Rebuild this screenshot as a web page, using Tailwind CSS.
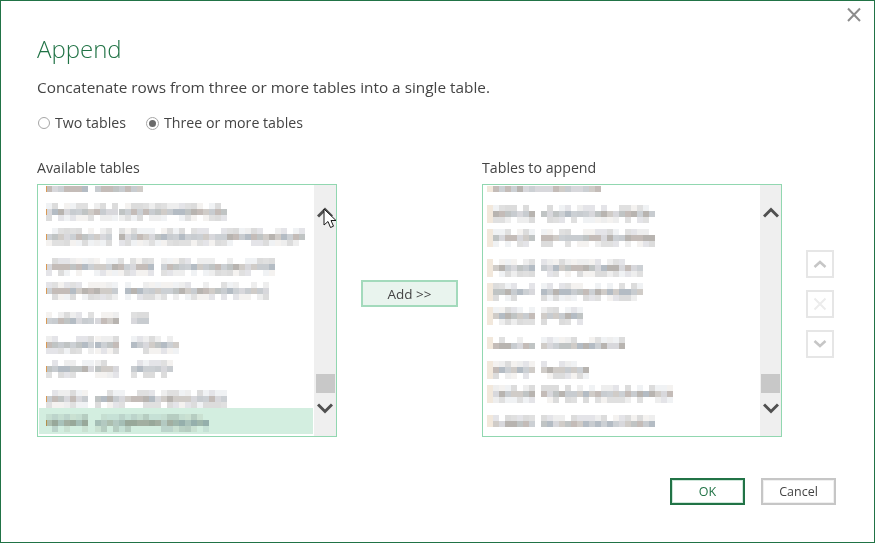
<!DOCTYPE html>
<html lang="en">
<head>
  <meta charset="UTF-8" />
  <title>Append</title>
  <script src="https://cdn.jsdelivr.net/npm/@tailwindcss/browser@4"></script>
</head>
<body class="bg-white overflow-hidden">
  <div class="relative w-[875px] h-[543px] border border-[#217346] flex flex-col pl-[36px] font-['Open_Sans',sans-serif] text-[#444444] text-[14.2px] leading-[20px]">
    <button class="absolute top-[6px] right-[12px] w-[16px] h-[16px]">
      <svg viewBox="0 0 16 16" class="w-[16px] h-[16px]" fill="none" stroke="#8c8c8c" stroke-width="2"><path d="M2 1.5l12 12.500M14 1.5L2 14"/></svg>
    </button>

    <h1 class="mt-[31px] h-[34px] text-[24px] leading-[34px] font-light text-[#217346]">Append</h1>
    <p class="mt-[11px] text-[15.35px]">Concatenate rows from three or more tables into a single table.</p>

    <div class="mt-[16px] flex items-center h-[20px]">
      <span class="w-[12px] h-[12px] ml-[1px] rounded-full border border-[#a6a6a6]"></span>
      <span class="ml-[5px]">Two tables</span>
      <span class="ml-[20px] w-[13px] h-[13px] rounded-full border border-[#a6a6a6] flex items-center justify-center"><span class="w-[7px] h-[7px] rounded-full bg-[#6a6a6a]"></span></span>
      <span class="ml-[5px]">Three or more tables</span>
    </div>

    <div class="mt-[25px] flex">
      <div class="w-[300px]">
        <div class="h-[20px]">Available tables</div>
        <div class="mt-[6px] h-[253px] border border-[#91d7b0] flex">
          <div id="left-rows" class="flex-1 flex flex-col justify-end pb-[2px] overflow-hidden"></div>
          <div class="w-[22px] bg-[#efefef] flex flex-col items-center">
            <svg class="mt-[21px] w-[16px] h-[12px]" viewBox="0 0 16 12" fill="none" stroke="#505050" stroke-width="3"><path d="M1 10.500l7-7 7 7"/></svg>
            <div class="mt-[156px] w-[19px] h-[19px] bg-[#c8c8c8]"></div>
            <svg class="mt-[10px] w-[16px] h-[12px]" viewBox="0 0 16 12" fill="none" stroke="#505050" stroke-width="3"><path d="M1 1.500l7 7 7-7"/></svg>
          </div>
        </div>
      </div>

      <div class="w-[145px] flex justify-center pt-[122px]">
        <button class="w-[97px] h-[27px] border-2 border-[#a3dabc] bg-[#e9f4ee] text-[13.5px] leading-[22px]">Add &gt;&gt;</button>
      </div>

      <div class="w-[300px]">
        <div class="h-[20px]">Tables to append</div>
        <div class="mt-[6px] h-[253px] border border-[#91d7b0] flex">
          <div id="right-rows" class="flex-1 flex flex-col justify-end pb-[2px] overflow-hidden"></div>
          <div class="w-[21px] bg-[#efefef] flex flex-col items-center">
            <svg class="mt-[21px] w-[16px] h-[12px]" viewBox="0 0 16 12" fill="none" stroke="#505050" stroke-width="3"><path d="M1 10.500l7-7 7 7"/></svg>
            <div class="mt-[156px] w-[19px] h-[19px] bg-[#c8c8c8]"></div>
            <svg class="mt-[10px] w-[16px] h-[12px]" viewBox="0 0 16 12" fill="none" stroke="#505050" stroke-width="3"><path d="M1 1.500l7 7 7-7"/></svg>
          </div>
        </div>
      </div>

      <div class="ml-[24px] pt-[92px] flex flex-col gap-[12px]">
        <button class="w-[28px] h-[28px] border-2 border-[#e6e6e6] flex items-center justify-center">
          <svg class="w-[14px] h-[10px]" viewBox="0 0 14 10" fill="none" stroke="#c6c6c6" stroke-width="2.500"><path d="M1.500 8l5.500-5 5.500 5"/></svg>
        </button>
        <button class="w-[28px] h-[28px] border-2 border-[#e6e6e6] flex items-center justify-center">
          <svg class="w-[14px] h-[14px]" viewBox="0 0 14 14" fill="none" stroke="#ececec" stroke-width="2"><path d="M1.500 1.500l11 11M12.500 1.500l-11 11"/></svg>
        </button>
        <button class="w-[28px] h-[28px] border-2 border-[#e6e6e6] flex items-center justify-center">
          <svg class="w-[14px] h-[10px]" viewBox="0 0 14 10" fill="none" stroke="#c6c6c6" stroke-width="2.500"><path d="M1.500 2l5.500 5 5.500-5"/></svg>
        </button>
      </div>
    </div>

    <div class="mt-[41px] flex justify-end gap-[16px] pr-[38px]">
      <button class="w-[75px] h-[27px] border-2 border-[#217346] shadow-[inset_0_0_0_1px_#cfe6da] text-[#217346] text-[12.5px]">OK</button>
      <button class="w-[75px] h-[27px] border-2 border-[#c6c6c6] shadow-[inset_0_0_0_1px_#f0f0f0] text-[12.5px]">Cancel</button>
    </div>

    <!-- mouse pointer lying over the scrollbar -->
    <svg class="absolute left-[322px] top-[207px] w-[14px] h-[22px]" viewBox="0 0 14 22">
      <path d="M1 1v16l4-3.500 2.500 6 3-1.300-2.500-5.700h5z" fill="#ffffff" stroke="#1a1a1a" stroke-width="1"/>
    </svg>
  </div>

  <script>
    // the names in the screenshot are pixelated: [top offset in row, bands, word ranges]
    const leftRows = [
      [12, 'm', [[46,83],[95,143]]],
      [3, 'lml', [[46,113],[119,227]]],
      [2, 'lml', [[46,107],[119,305]]],
      [6, 'lml', [[46,149],[161,275]]],
      [4, 'lml', [[46,113],[125,269]]],
      [8, 'lm', [[46,89],[95,119],[131,149]]],
      [6, 'lml', [[46,89],[95,119],[131,179]]],
      [4, 'lml', [[46,89],[95,119],[131,173]]],
      [8, 'lml', [[46,83],[95,227]]],
      [6, 'lml', [[46,83],[95,209]]],
    ];
    const rightRows = [
      [12, 'm', [[487,601]]],
      [5, 'lml', [[487,535],[541,655]]],
      [3, 'lml', [[487,535],[541,655]]],
      [7, 'lml', [[487,535],[541,643]]],
      [5, 'lml', [[487,535],[541,643]]],
      [3, 'lml', [[487,535],[541,583]]],
      [7, 'lm', [[487,535],[541,625]]],
      [5, 'lml', [[487,535],[541,589]]],
      [3, 'lml', [[487,535],[541,673]]],
      [7, 'lm', [[487,535],[541,655]]],
    ];
    const mids = ['#b4bcc4','#c4bcb8','#c0c4c4','#b8b4b0','#ccd0d4','#d0ccc8','#c8ccd0','#d8d8dc'];
    const lights = ['#e4e4e8','#eeeeee','#f4f2f0','#e0e0e0','#f0f2f4','#dcdcdc','#ffffff','#ffffff'];
    let seed = 7;
    function rnd(n) {
      seed = (seed * 16807) % 2147483647;
      return seed % n;
    }

    function buildRows(id, rows, base, marker) {
      const list = document.getElementById(id);
      rows.forEach((row, i) => {
        const selected = id === 'left-rows' && i === rows.length - 1;
        let rects = '';
        row[1].split('').forEach((band, b) => {
          const y = row[0] + b * 6;
          row[2].forEach(([x0, x1]) => {
            for (let x = x0; x < x1; x += 6) {
              const colors = band === 'm' ? mids : lights;
              rects += `<rect x="${x - base}" y="${y}" width="6" height="6" fill="${colors[rnd(8)]}"/>`;
            }
          });
          if (marker === 'edge' && band === 'm') {
            rects += `<rect x="${46 - base}" y="${y}" width="1" height="6" fill="#d99a55"/>`;
          }
          if (marker === 'tan') {
            rects += `<rect x="${487 - base}" y="${y}" width="6" height="6" fill="#f2e8dc"/>`;
          }
        });
        const div = document.createElement('div');
        div.className = selected ? 'h-[26px] shrink-0 ml-[1px] mr-[1px] bg-[#d3eee0]' : 'h-[26px] shrink-0';
        const left = selected ? -1 : 0;
        div.innerHTML = `<svg width="276" height="26" style="margin-left:${left}px;mix-blend-mode:multiply">${rects}</svg>`;
        list.appendChild(div);
      });
    }
    buildRows('left-rows', leftRows, 38, 'edge');
    buildRows('right-rows', rightRows, 483, 'tan');
  </script>
</body>
</html>
